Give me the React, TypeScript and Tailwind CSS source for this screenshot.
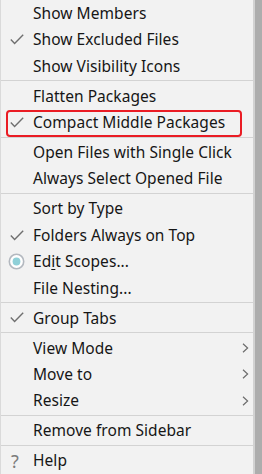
import React from "react";

type Item = {
  label: React.ReactNode;
  icon?: "check" | "radio" | "help";
  sub?: boolean;
  highlight?: boolean;
};

const sections: Item[][] = [
  [
    { label: "Show Members" },
    { label: "Show Excluded Files", icon: "check" },
    { label: "Show Visibility Icons" },
  ],
  [
    { label: "Flatten Packages" },
    { label: "Compact Middle Packages", icon: "check", highlight: true },
  ],
  [
    { label: "Open Files with Single Click" },
    { label: "Always Select Opened File" },
  ],
  [
    { label: "Sort by Type" },
    { label: "Folders Always on Top", icon: "check" },
    {
      label: (
        <>
          Ed<span className="underline underline-offset-2">i</span>t Scopes...
        </>
      ),
      icon: "radio",
    },
    { label: "File Nesting..." },
  ],
  [{ label: "Group Tabs", icon: "check" }],
  [
    { label: "View Mode", sub: true },
    { label: "Move to", sub: true },
    { label: "Resize", sub: true },
  ],
  [{ label: "Remove from Sidebar" }],
  [{ label: "Help", icon: "help" }],
];

function Icon({ kind }: { kind?: Item["icon"] }) {
  if (kind === "check")
    return (
      <svg width="14" height="11" viewBox="0 0 14 11" className="ml-[9px]">
        <path d="M0.8 5.6 L4.6 9.4 L13.2 0.8" fill="none" stroke="#6f6f6f" strokeWidth="1.4" />
      </svg>
    );
  if (kind === "radio")
    return (
      <svg width="17" height="17" viewBox="0 0 17 17" className="ml-[7px]">
        <circle cx="8.5" cy="8.5" r="7.2" fill="#ffffff" stroke="#b3b8bf" strokeWidth="1.6" />
        <circle cx="8.5" cy="8.5" r="3.9" fill="#8fd0d8" />
      </svg>
    );
  if (kind === "help")
    return (
      <span className="ml-[10px] text-[18px] leading-none text-[#7c7c7c]" style={{ fontFamily: "'Noto Sans', sans-serif" }}>
        ?
      </span>
    );
  return null;
}

function Row({ item }: { item: Item }) {
  return (
    <div className="relative flex h-[26.4px] items-center">
      <div className="flex w-[32px] shrink-0 items-center">
        <Icon kind={item.icon} />
      </div>
      <span className="pt-[1px] text-[15.5px] leading-none tracking-[0.05px] text-[#161616] whitespace-nowrap">
        {item.label}
      </span>
      {item.sub && (
        <svg width="7" height="10" viewBox="0 0 7 10" className="ml-auto mr-[4px]">
          <path d="M1 0.8 L5.6 5 L1 9.2" fill="none" stroke="#6c6c6c" strokeWidth="1.2" />
        </svg>
      )}
      {item.highlight && (
        <div className="pointer-events-none absolute left-[5px] right-[11px] top-[1px] bottom-[-1px] rounded-[4px] border-2 border-[#ea1c24]" />
      )}
    </div>
  );
}

export default function App() {
  return (
    <div
      className="flex h-[474px] w-[262px] overflow-hidden bg-[#adadad]"
      style={{ fontFamily: "'Noto Sans', 'Open Sans', sans-serif" }}
    >
      <div className="flex w-[253px] shrink-0 flex-col border-l border-[#dadada] bg-[#f2f2f2]">
        {sections.map((sec, i) => (
          <React.Fragment key={i}>
            {i > 0 && (
              <div className="flex h-[3.6px] shrink-0 items-center">
                <div className="h-px w-full bg-[#d3d3d3]" />
              </div>
            )}
            {sec.map((it, j) => (
              <Row key={j} item={it} />
            ))}
          </React.Fragment>
        ))}
      </div>
      <div className="w-[2px] shrink-0 bg-[#d2d2d2]" />
      <div className="flex-1 bg-[#adadad]" />
    </div>
  );
}
